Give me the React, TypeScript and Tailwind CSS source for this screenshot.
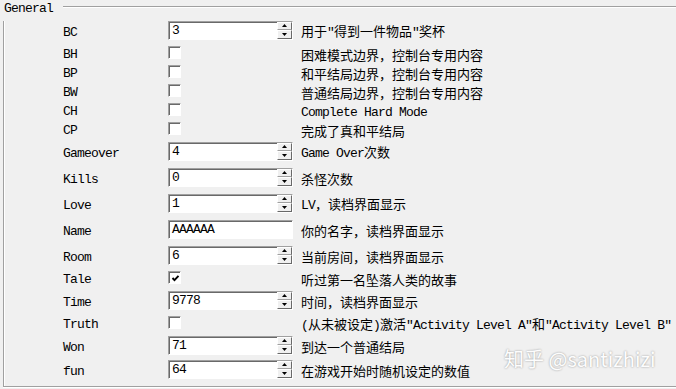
import React from 'react';

// Typer for radene i egenskapspanelet
type Row = {
	key: string;
	kind: 'spin' | 'check' | 'text';
	value?: string;
	checked?: boolean;
	desc: string;
	h: string;
};

const rows: Row[] = [
	{ key: 'BC', kind: 'spin', value: '3', desc: '用于"得到一件物品"奖杯', h: 'h-[26px]' },
	{ key: 'BH', kind: 'check', desc: '困难模式边界，控制台专用内容', h: 'h-[19px]' },
	{ key: 'BP', kind: 'check', desc: '和平结局边界，控制台专用内容', h: 'h-[19px]' },
	{ key: 'BW', kind: 'check', desc: '普通结局边界，控制台专用内容', h: 'h-[19px]' },
	{ key: 'CH', kind: 'check', desc: 'Complete Hard Mode', h: 'h-[19px]' },
	{ key: 'CP', kind: 'check', desc: '完成了真和平结局', h: 'h-[19px]' },
	{ key: 'Gameover', kind: 'spin', value: '4', desc: 'Game Over次数', h: 'h-[26px]' },
	{ key: 'Kills', kind: 'spin', value: '0', desc: '杀怪次数', h: 'h-[26px]' },
	{ key: 'Love', kind: 'spin', value: '1', desc: 'LV，读档界面显示', h: 'h-[26px]' },
	{ key: 'Name', kind: 'text', value: 'AAAAAA', desc: '你的名字，读档界面显示', h: 'h-[26px]' },
	{ key: 'Room', kind: 'spin', value: '6', desc: '当前房间，读档界面显示', h: 'h-[26px]' },
	{ key: 'Tale', kind: 'check', checked: true, desc: '听过第一名坠落人类的故事', h: 'h-[19px]' },
	{ key: 'Time', kind: 'spin', value: '9778', desc: '时间，读档界面显示', h: 'h-[26px]' },
	{ key: 'Truth', kind: 'check', desc: '(从未被设定)激活"Activity Level A"和"Activity Level B"', h: 'h-[19px]' },
	{ key: 'Won', kind: 'spin', value: '71', desc: '到达一个普通结局', h: 'h-[26px]' },
	{ key: 'fun', kind: 'spin', value: '64', desc: '在游戏开始时随机设定的数值', h: 'h-[22px]' },
];

const mono = "font-['Liberation_Mono',monospace] text-[13px] tracking-[-0.8px]";
const cjk = "font-['Noto_Sans_CJK_SC',sans-serif] text-[13px]";

// Deler teksten i latinske og kinesiske biter
function Rich({ text }: { text: string }) {
	const parts = text.match(/[\x00-\x7f]+|[^\x00-\x7f]+/g) || [];
	return (
		<>
			{parts.map((p, i) =>
				/^[\x00-\x7f]/.test(p) ? (
					<span key={i} className={`${mono} whitespace-pre`}>
						{p}
					</span>
				) : (
					<span key={i} className={cjk}>
						{p}
					</span>
				)
			)}
		</>
	);
}

function Arrow({ up }: { up: boolean }) {
	return (
		<svg width="5" height="3" viewBox="0 0 5 3">
			<path d={up ? 'M0 3 L2.5 0 L5 3 Z' : 'M0 0 L2.5 3 L5 0 Z'} fill="#000" />
		</svg>
	);
}

function Spinner() {
	return (
		<div className="w-[15px] flex flex-col">
			<div className="flex-1 flex items-center justify-center bg-[#f0f0f0] border border-t-white border-l-white border-b-[#a0a0a0] border-r-[#696969]">
				<Arrow up />
			</div>
			<div className="flex-1 flex items-center justify-center bg-[#f0f0f0] border border-t-white border-l-white border-b-[#696969] border-r-[#696969]">
				<Arrow up={false} />
			</div>
		</div>
	);
}

function Field({ value, spin }: { value: string; spin: boolean }) {
	return (
		<div className="h-[19px] w-[125px] flex bg-white border border-t-[#a0a0a0] border-l-[#a0a0a0] border-b-white border-r-white shadow-[inset_1px_1px_0_#696969]">
			<span className={`flex-1 pl-[3px] pt-[1px] leading-[16px] ${mono}`}>{value}</span>
			{spin && <Spinner />}
		</div>
	);
}

function Check({ checked }: { checked?: boolean }) {
	return (
		<div className="w-[13px] h-[13px] flex items-center justify-center bg-white border border-t-[#a0a0a0] border-l-[#a0a0a0] border-b-white border-r-white shadow-[inset_1px_1px_0_#696969]">
			{checked && (
				<svg width="9" height="9" viewBox="0 0 9 9" className="ml-[1px] mt-[1px]">
					<path d="M1.5 4 L3.5 6.2 L7.5 1.8" stroke="#000" strokeWidth="1.9" fill="none" />
				</svg>
			)}
		</div>
	);
}

export default function App() {
	return (
		<div className="w-[676px] h-[389px] bg-[#f0f0f0] relative overflow-hidden text-black">
			<div className="flex items-center h-[14px]">
				<span className={`pl-[4px] pt-[3px] leading-[14px] ${mono}`}>General</span>
				<div className="ml-[10px] flex-1 h-[2px] border-t border-b border-t-[#a0a0a0] border-b-white" />
			</div>

			<div className="ml-[3px] flex border-b border-[#a0a0a0] shadow-[0_1px_0_#ffffff]">
				<div className="mt-[7px] w-[2px] border-l border-r border-l-[#a0a0a0] border-r-white" />
				<div className="flex-1 pl-[58px] pt-[3px] pb-[6px]">
					{rows.map((r) => (
						<div key={r.key} className={`flex items-center ${r.h}`}>
							<div className={`w-[105px] pt-[4px] leading-[15px] ${mono}`}>{r.key}</div>
							<div className="w-[125px] flex items-center">
								{r.kind === 'check' ? (
									<Check checked={r.checked} />
								) : (
									<Field value={r.value || ''} spin={r.kind === 'spin'} />
								)}
							</div>
							<div className="ml-[8px] pt-[3px] whitespace-nowrap leading-[15px]">
								<Rich text={r.desc} />
							</div>
						</div>
					))}
				</div>
			</div>

			<div className="absolute left-[504px] top-[346px] font-['Noto_Sans_CJK_SC',sans-serif] text-[20px] leading-[26px] text-white whitespace-nowrap [text-shadow:0_0_2px_rgba(0,0,0,0.45)] opacity-90">
				知乎 @santizhizi
			</div>
		</div>
	);
}
